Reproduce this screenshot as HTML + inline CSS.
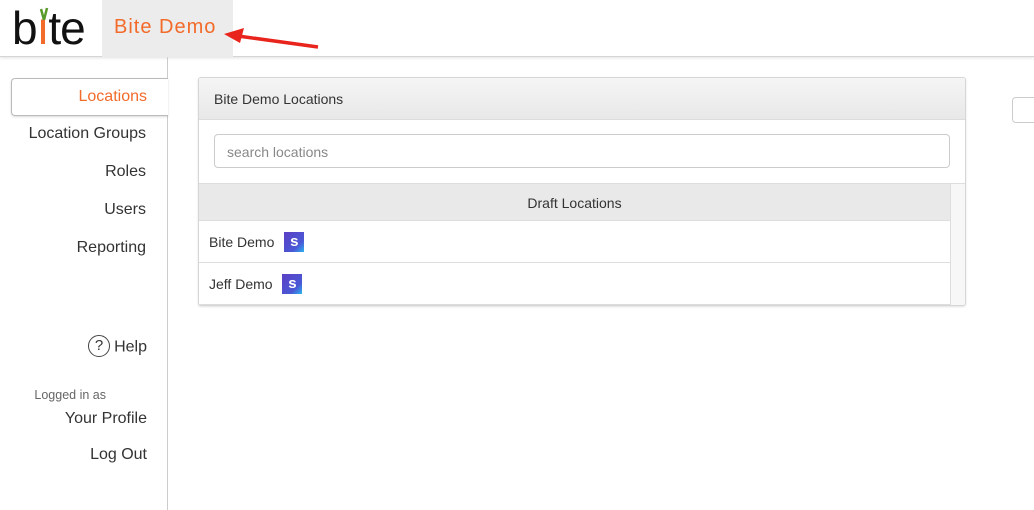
<!DOCTYPE html>
<html><head><style>
*{box-sizing:border-box;margin:0;padding:0}
body{width:1034px;height:510px;overflow:hidden;background:#fff;font-family:"Liberation Sans",Helvetica,sans-serif;position:relative;color:#333}
.hdr{position:absolute;left:0;top:0;width:1034px;height:57px;border-bottom:1px solid #d5d5d5;box-shadow:0 1px 3px rgba(0,0,0,.12);background:#fff}
.tab{position:absolute;left:102px;top:0;width:131px;height:57px;background:#ececec;color:#f26b2a;font-size:20px;letter-spacing:1px;padding:16px 0 0 12px}
.logo{position:absolute;left:12px;top:8px;font-size:46px;font-weight:normal;color:#111;letter-spacing:-1px;line-height:40px}
.side{position:absolute;left:167px;top:57px;width:1px;height:453px;background:#ccc}
.loc{position:absolute;left:11px;top:78px;width:157px;height:38px;border:1px solid #bbb;border-right:none;border-radius:4px 0 0 4px;background:#fff;color:#f26b2a;font-size:16px;text-align:right;padding:9px 21px 0 0;box-shadow:0 1px 2px rgba(0,0,0,.15)}
.nav{position:absolute;right:888px;font-size:16px;color:#333;text-align:right}
.panel{position:absolute;left:198px;top:77px;width:768px;height:229px;border:1px solid #d6d6d6;border-radius:3px;box-shadow:0 1px 2px rgba(0,0,0,.12);background:#fff;overflow:hidden}
.ph{height:42px;background:linear-gradient(#f5f5f5,#e8e8e8);border-bottom:1px solid #ddd;font-size:14px;padding:13px 0 0 15px}
.srch{position:absolute;left:15px;top:56px;width:736px;height:34px;border:1px solid #ccc;border-radius:4px;font-size:14px;color:#888;padding:9px 0 0 12px}
.dh{position:absolute;left:0;top:105px;width:751px;height:38px;background:#e9e9e9;border-top:1px solid #ddd;border-bottom:1px solid #ddd;font-size:14px;text-align:center;padding-top:11px}
.sb{position:absolute;left:751px;top:105px;width:16px;height:124px;background:#f7f7f7;border-left:1px solid #ddd;border-top:1px solid #ddd}
.row{position:absolute;left:0;width:751px;height:42px;border-bottom:1px solid #ddd;font-size:14px;padding:13px 0 0 10px}
.s{display:inline-block;width:20px;height:20px;background:linear-gradient(135deg,#5b3fc4,#4a58d6 70%,#2bb6f0);color:#fff;font-weight:bold;font-size:15px;text-align:center;line-height:20px;vertical-align:middle;margin-left:6px;margin-top:-3px}
</style></head><body>
<div class="hdr"></div>
<div class="logo">b<span style="color:#f26b2a">ı</span>te</div>
<svg style="position:absolute;left:38px;top:6px" width="12" height="14"><path d="M6 14 L3 3 M6 14 L9 2" stroke="#5a9a2a" stroke-width="2.5" fill="none"/></svg>
<div class="tab">Bite Demo</div>
<svg style="position:absolute;left:222px;top:26px" width="100" height="26"><path d="M96 21 L16 10" stroke="#e8241c" stroke-width="3.5"/><path d="M2 8 L22 2 L18 17 Z" fill="#e8241c"/></svg>
<div class="side"></div>
<div class="loc">Locations</div>
<div class="nav" style="top:125px">Location Groups</div>
<div class="nav" style="top:163px">Roles</div>
<div class="nav" style="top:201px">Users</div>
<div class="nav" style="top:239px">Reporting</div>
<div class="nav" style="top:338px;right:887px"><span style="display:inline-block;width:22px;height:22px;border:1px solid #444;border-radius:50%;font-size:15px;text-align:center;line-height:20px;margin-right:4px;vertical-align:middle;margin-top:-3px">?</span>Help</div>
<div class="nav" style="top:388px;font-size:12.5px;color:#666;right:928px">Logged in as</div>
<div class="nav" style="top:410px;right:887px">Your Profile</div>
<div class="nav" style="top:446px;right:887px">Log Out</div>
<div class="panel">
<div class="ph">Bite Demo Locations</div>
<div class="srch">search locations</div>
<div class="dh">Draft Locations</div>
<div class="sb"></div>
<div class="row" style="top:143px">Bite Demo <span class="s">s</span></div>
<div class="row" style="top:185px">Jeff Demo <span class="s">s</span></div>
</div>
<div style="position:absolute;left:1012px;top:97px;width:30px;height:26px;border:1px solid #ccc;border-radius:4px"></div>
</body></html>
